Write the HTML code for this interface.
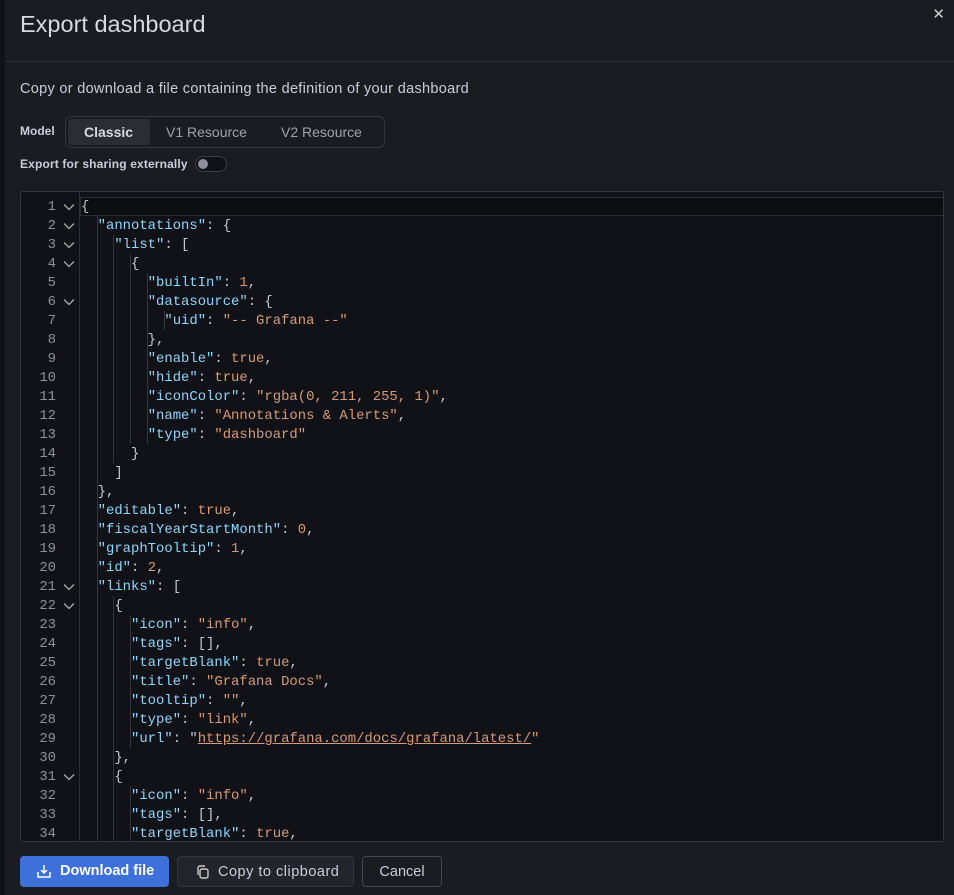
<!DOCTYPE html><html><head><style>
body{margin:0;width:954px;height:895px;background:#111217;overflow:hidden;font-family:"Liberation Sans",sans-serif;color:#ccccdc;position:relative}
.modal{position:absolute;left:5px;top:0;width:949px;height:895px;background:#1b1c21}
.hdr{position:absolute;left:0;top:0;right:0;height:61px;border-bottom:1px solid #2c2e33}
h1{position:absolute;left:15px;top:11px;margin:0;font-weight:400;font-size:23.5px;color:#d8d9e0}
.x{position:absolute;right:9px;top:5px;font-size:15px;color:#ccc}
.ab{position:absolute}
.seg{position:absolute;left:60px;top:116px;width:318px;height:30px;border:1px solid #34363c;border-radius:6px}
.seg span{position:absolute;top:7px;font-size:14px;color:#a0a2aa}
.ed{position:absolute;left:15px;top:191px;width:922px;height:649px;border:1px solid #34363c;border-radius:3px;background:#111217;overflow:hidden}
.code{position:absolute;left:0;top:6px;font-family:"Liberation Mono",monospace;font-size:13.9px;line-height:19px;white-space:pre}
.ln{position:absolute;left:0;width:35px;text-align:right;color:#8e909a}
.cv{position:absolute;left:42px;width:12px;height:12px}
.t{position:absolute;left:60px;color:#c8c8d0}
.k{color:#8ed6fb}.s{color:#d79a77}.n{color:#d79a77}
.g{position:absolute;width:1px;background:#34363c}
.btn{position:absolute;top:856px;height:31px;border-radius:4px;font-size:14.5px;line-height:31px;box-sizing:border-box}
</style></head><body>
<div class="modal">
<div class="hdr"><h1>Export dashboard</h1><div class="x">✕</div></div>
<div class="ab" style="left:15px;top:81px;font-size:14.5px;letter-spacing:0.3px;color:#ccccdc">Copy or download a file containing the definition of your dashboard</div>
<div class="ab" style="left:15px;top:124px;font-size:12px;font-weight:bold;color:#ccccdc">Model</div>
<div class="seg"><div style="position:absolute;left:2px;top:2px;width:82px;height:26px;background:#2c2d33;border-radius:4px"></div>
<span style="left:18px;color:#d8d9e0;font-weight:bold">Classic</span><span style="left:100px">V1 Resource</span><span style="left:215px">V2 Resource</span></div>
<div class="ab" style="left:15px;top:157px;font-size:12px;font-weight:bold;letter-spacing:0.15px;color:#ccccdc">Export for sharing externally</div>
<div class="ab" style="left:190px;top:156px;width:30px;height:14px;border:1px solid #3c3e44;border-radius:8px;background:#111217"><div style="position:absolute;left:2px;top:2px;width:10px;height:10px;border-radius:50%;background:#8e909a"></div></div>
<div class="ed">
<div class="ab" style="left:59px;top:5px;width:862px;height:17px;border:1px solid #2c2e33;background:#0d0e12"></div>
<div class="ab" style="left:58px;top:0;width:1px;height:649px;background:#2c2e33"></div>
<div class="g" style="left:76px;top:24px;height:625px"></div>
<div class="g" style="left:92px;top:43px;height:228px"></div>
<div class="g" style="left:109px;top:62px;height:190px"></div>
<div class="g" style="left:126px;top:81px;height:171px"></div>
<div class="g" style="left:143px;top:119px;height:19px"></div>
<div class="g" style="left:92px;top:404px;height:245px"></div>
<div class="g" style="left:109px;top:423px;height:133px"></div>
<div class="g" style="left:109px;top:594px;height:55px"></div>
<div class="code" id="c"></div>
</div>
<div class="btn" style="left:15px;width:149px;background:#3d71d9;color:#fff;font-weight:bold;padding-left:40px">Download file<svg style="position:absolute;left:17px;top:8px" width="14" height="14" viewBox="0 0 14 14" fill="none" stroke="#fff" stroke-width="1.5"><path d="M7 1v8M4 6l3 3 3-3M1 8v5h12V8"/></svg></div>
<div class="btn" style="left:172px;width:177px;background:#22252b;border:1px solid #34363c;color:#ccccdc;padding-left:40px;letter-spacing:0.5px">Copy to clipboard<svg style="position:absolute;left:18px;top:8px" width="14" height="14" viewBox="0 0 14 14" fill="none" stroke="#ccc" stroke-width="1.4"><rect x="4" y="4" width="8" height="9" rx="2"/><path d="M2 10V3a2 2 0 0 1 2-2h5"/></svg></div>
<div class="btn" style="left:357px;width:80px;border:1px solid #44464c;color:#ccccdc;text-align:center">Cancel</div>
</div>
<script>
const L=[
['{',1],['  "annotations": {',1],['    "list": [',1],['      {',1],['        "builtIn": 1,'],['        "datasource": {',1],['          "uid": "-- Grafana --"'],['        },'],['        "enable": true,'],['        "hide": true,'],['        "iconColor": "rgba(0, 211, 255, 1)",'],['        "name": "Annotations & Alerts",'],['        "type": "dashboard"'],['      }'],['    ]'],['  },'],['  "editable": true,'],['  "fiscalYearStartMonth": 0,'],['  "graphTooltip": 1,'],['  "id": 2,'],['  "links": [',1],['    {',1],['      "icon": "info",'],['      "tags": [],'],['      "targetBlank": true,'],['      "title": "Grafana Docs",'],['      "tooltip": "",'],['      "type": "link",'],['      "url": "https://grafana.com/docs/grafana/latest/"'],['    },'],['    {',1],['      "icon": "info",'],['      "tags": [],'],['      "targetBlank": true,']];
const esc=s=>s.replace(/&/g,'&amp;').replace(/</g,'&lt;');
let h='';
L.forEach((l,i)=>{const y=i*19;
h+=`<div class="ln" style="top:${y}px">${i+1}</div>`;
if(l[1])h+=`<svg class="cv" style="top:${y+3}px" viewBox="0 0 12 12"><path d="M1 3.5l5 5 5-5" fill="none" stroke="#aaa" stroke-width="1.3"/></svg>`;
let t=esc(l[0]);
t=t.replace(/^(\s*)("[^"]*")(:)/,'$1<span class="k">$2</span>$3');
t=t.replace(/(: )("[^"]*")/,(m,a,b)=>{if(b.includes('https'))return a+'"<span class="s" style="text-decoration:underline">'+b.slice(1,-1)+'</span><span class="s">"</span>';return a+'<span class="s">'+b+'</span>'});
t=t.replace(/(: )(true|\d+)/,'$1<span class="n">$2</span>');
h+=`<div class="t" style="top:${y}px">${t}</div>`;});
document.getElementById('c').innerHTML=h;
</script>
</body></html>
